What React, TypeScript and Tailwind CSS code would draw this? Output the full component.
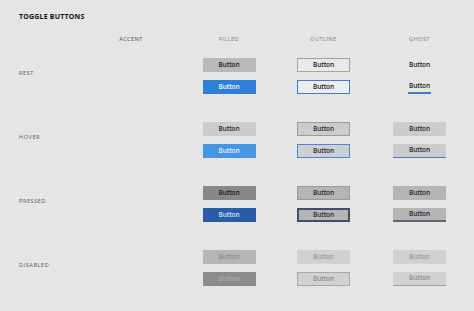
const cols = ['w-[94px]', 'w-[102px]', 'w-[87px]', 'w-[105px]'];

type Btn = { cls: string; text?: string; ghostLine?: boolean };

const groups: { label: string; cells: [Btn, Btn][] }[] = [
  {
    label: 'REST',
    cells: [
      [
        { cls: 'bg-[#b9b9b9] text-[#1a1a1a]' },
        { cls: 'bg-[#2f7fd4] text-[#f4f8fd]' },
      ],
      [
        { cls: 'bg-[#e9e9e9] border border-[#a3a3a3] text-[#1a1a1a]' },
        { cls: 'bg-[#ecedf0] border border-[#3f7cc9] text-[#1a1a1a]' },
      ],
      [
        { cls: 'text-[#1a1a1a]' },
        { cls: 'text-[#1a1a1a]', ghostLine: true },
      ],
    ],
  },
  {
    label: 'HOVER',
    cells: [
      [
        { cls: 'bg-[#cccccc] text-[#262626]' },
        { cls: 'bg-[#4795e2] text-[#e6f0fb]' },
      ],
      [
        { cls: 'bg-[#cccccc] border border-[#9c9c9c] text-[#262626]' },
        { cls: 'bg-[#cdcfd2] border border-[#4b88d4] text-[#262626]' },
      ],
      [
        { cls: 'bg-[#cccccc] text-[#262626]' },
        { cls: 'bg-[#cccccc] border-b border-[#3f7cc9] text-[#262626]' },
      ],
    ],
  },
  {
    label: 'PRESSED',
    cells: [
      [
        { cls: 'bg-[#888888] text-[#1a1a1a]' },
        { cls: 'bg-[#2b5ca7] text-[#d6e3f3]' },
      ],
      [
        { cls: 'bg-[#b5b5b5] border border-[#9a9a9a] text-[#262626]' },
        { cls: 'bg-[#b5b5b5] border-2 border-[#3d516f] text-[#262626]' },
      ],
      [
        { cls: 'bg-[#b5b5b5] text-[#262626]' },
        { cls: 'bg-[#b5b5b5] border-b-2 border-[#5c6674] text-[#262626]' },
      ],
    ],
  },
  {
    label: 'DISABLED',
    cells: [
      [
        { cls: 'bg-[#b6b6b6] text-[#8a8a8a]' },
        { cls: 'bg-[#8b8b8b] text-[#a9a9a9]' },
      ],
      [
        { cls: 'bg-[#d1d1d1] text-[#9a9a9a]' },
        { cls: 'bg-[#d1d1d1] border border-[#a8a8a8] text-[#8e8e8e]' },
      ],
      [
        { cls: 'bg-[#d1d1d1] text-[#9a9a9a]' },
        { cls: 'bg-[#d1d1d1] border-b border-[#9e9e9e] text-[#8e8e8e]' },
      ],
    ],
  },
];

function ToggleButton({ cls, ghostLine }: Btn) {
  return (
    <div className={`flex h-[14px] w-[53px] items-center justify-center text-[6.5px] font-semibold leading-none tracking-[-0.1px] ${cls}`}>
      {ghostLine ? (
        <span className="mt-[3px] border-b-2 border-[#3f7cc9] pb-[2px] px-[1px]">Button</span>
      ) : (
        'Button'
      )}
    </div>
  );
}

export default function App() {
  return (
    <div className="h-[311px] w-[474px] overflow-hidden bg-[#e5e5e5] font-['Open_Sans',sans-serif]">
      <div className="pl-[19px] pt-[13px] text-[7px] font-bold leading-[8px] tracking-[0.2px] text-[#111111]">
        TOGGLE BUTTONS
      </div>

      {/* column headings */}
      <div className="mt-[14px] flex text-[5.5px] leading-[8px] tracking-[0.5px] text-[#7a7a7a]">
        <div className="w-[84px]" />
        <div className={`${cols[0]} text-center text-[#4a4a4a]`}>ACCENT</div>
        <div className={`${cols[1]} text-center`}>FILLED</div>
        <div className={`${cols[2]} text-center`}>OUTLINE</div>
        <div className={`${cols[3]} text-center`}>GHOST</div>
      </div>

      <div className="mt-[15px] flex flex-col gap-[28px]">
        {groups.map((g) => (
          <div key={g.label} className="flex h-[36px]">
            <div className="w-[84px] pl-[19px] pt-[11px] text-[5.5px] leading-[8px] tracking-[0.6px] text-[#555555]">
              {g.label}
            </div>
            <div className={cols[0]} />
            {g.cells.map((pair, i) => (
              <div key={i} className={`${cols[i + 1]} flex flex-col items-center gap-[8px]`}>
                <ToggleButton {...pair[0]} />
                <ToggleButton {...pair[1]} />
              </div>
            ))}
          </div>
        ))}
      </div>
    </div>
  );
}
